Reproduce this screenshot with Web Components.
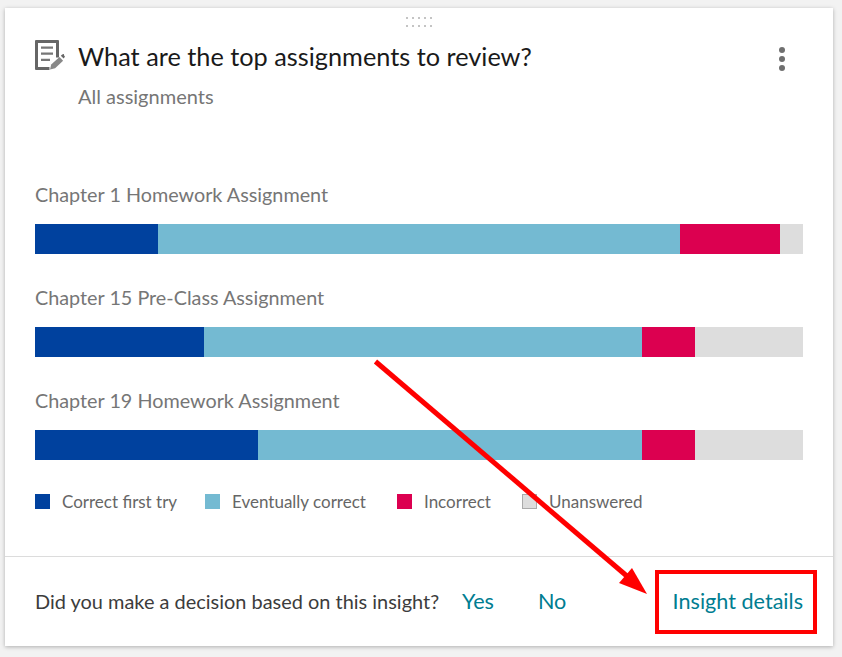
<!DOCTYPE html>
<html>
<head>
<meta charset="utf-8">
<style>
  html, body { margin: 0; height: 100%; background: #f2f2f2; }
  body { position: relative; overflow: hidden; padding: 8px 9px 0 5px; box-sizing: border-box; font-family: Lato, sans-serif; }
</style>
</head>
<body>
<insight-card>
  <span slot="title">What are the top assignments to review?</span>
  <span slot="subtitle">All assignments</span>
  <assignment-row label="Chapter 1 Homework Assignment" values="123,522,100,23"></assignment-row>
  <assignment-row label="Chapter 15 Pre-Class Assignment" values="169,438,53,108"></assignment-row>
  <assignment-row label="Chapter 19 Homework Assignment" values="223,384,53,108"></assignment-row>
  <chart-legend slot="legend"></chart-legend>
  <decision-footer slot="footer"></decision-footer>
</insight-card>
<callout-overlay></callout-overlay>

<script>
const fontStack = 'Lato, sans-serif';

class InsightCard extends HTMLElement {
  constructor() {
    super();
    this.attachShadow({ mode: 'open' });
    this.shadowRoot.innerHTML = `
      <style>
        :host{display: flex; flex-direction: column; width: 828px; height: 638px; background: #fff; box-shadow: 0 1px 4px rgba(0,0,0,.28); font-family: ${fontStack};}
        #grip{display: grid; grid-template-columns: repeat(5, 2px); grid-auto-rows: 2px; gap: 6px 4px; justify-content: center; align-content: start; padding-top: 9px; height: 11px;}
        #grip i{width: 2px; height: 2px; background: #c4c4c4;}
        header{display: flex; height: 104px; padding: 11px 48px 0 30px; box-sizing: border-box;}
        #icon{width: 30px; height: 30px; flex: none; margin-top: 1px;}
        #titles{flex: 1; margin-left: 13px;}
        #title{font-size: 25.300px; line-height: 34px; color: #1a1a1a;}
        #subtitle{font-size: 20px; line-height: 24px; margin-top: 11px; color: #767676;}
        #dots{width: 6px; display: flex; flex-direction: column; gap: 3px; padding-top: 8px;}
        #dots i{width: 6px; height: 6px; border-radius: 50%; background: #6f6f6f;}
        #rows{display: flex; flex-direction: column; gap: 32px; padding: 0 30px; margin-top: 51px;}
        #legend{padding: 0 30px; margin-top: 29px;}
        #footer{margin-top: auto; border-top: 1px solid #dcdcdc; height: 90px; box-sizing: border-box;}
      </style>
      <div id="grip">${'<i></i>'.repeat(10)}</div>
      <header>
        <svg id="icon" viewBox="0 0 30 30">
          <path d="M1 0h22a1 1 0 0 1 1 1v16.500h-3V3H3v24h11.500v3H1a1 1 0 0 1-1-1V1a1 1 0 0 1 1-1z" fill="#666"/>
          <path d="M6 6.500h12v2.300H6zM6 12.500h12v2.300H6zM6 18.800h9v2.300H6z" fill="#777"/>
          <path d="M15 29.500l1.200-5 8.300-7.500 3.600 3.700-8 7.500z" fill="#888"/>
          <path d="M25.800 15.800l1.400-1.200 1.500-.6 .3 .3v1l1 1.500-1.400 1.600z" fill="#666"/>
        </svg>
        <div id="titles">
          <div id="title"><slot name="title"></slot></div>
          <div id="subtitle"><slot name="subtitle"></slot></div>
        </div>
        <div id="dots"><i></i><i></i><i></i></div>
      </header>
      <div id="rows"><slot></slot></div>
      <div id="legend"><slot name="legend"></slot></div>
      <div id="footer"><slot name="footer"></slot></div>
    `;
  }
}

const barColors = ['#00419e', '#74bad2', '#dc0050', '#dddddd'];

class AssignmentRow extends HTMLElement {
  constructor() {
    super();
    this.attachShadow({ mode: 'open' });
    this.shadowRoot.innerHTML = `
      <style>
        :host{display: block;}
        #label{font-size: 19.800px; line-height: 22px; height: 24px; margin-bottom: 17px; color: #767676;}
        #bar{display: flex; height: 30px;}
      </style>
      <div id="label"></div>
      <div id="bar"></div>
    `;
  }

  connectedCallback() {
    this.shadowRoot.getElementById('label').textContent = this.getAttribute('label');
    let bar = this.shadowRoot.getElementById('bar');
    this.getAttribute('values').split(',').forEach((width, i) => {
      let part = document.createElement('div');
      part.style.width = width + 'px';
      part.style.background = barColors[i];
      bar.appendChild(part);
    });
  }
}

class ChartLegend extends HTMLElement {
  constructor() {
    super();
    this.attachShadow({ mode: 'open' });
    this.shadowRoot.innerHTML = `
      <style>
        :host{display: flex; align-items: center; height: 24px; font-size: 17px; color: #666;}
        .item{display: flex; align-items: center; white-space: nowrap;}
        .item i{width: 15px; height: 15px; margin-right: 12px; box-sizing: border-box;}
        .item:nth-of-type(1){width: 170px;}
        .item:nth-of-type(2){width: 192px;}
        .item:nth-of-type(3){width: 125px;}
        .item:nth-of-type(4) i{border: 1px solid #aaa;}
      </style>
      <div class="item"><i style="background:${barColors[0]}"></i>Correct first try</div>
      <div class="item"><i style="background:${barColors[1]}"></i>Eventually correct</div>
      <div class="item"><i style="background:${barColors[2]}"></i>Incorrect</div>
      <div class="item"><i style="background:${barColors[3]}"></i>Unanswered</div>
    `;
  }
}

class DecisionFooter extends HTMLElement {
  constructor() {
    super();
    this.attachShadow({ mode: 'open' });
    this.shadowRoot.innerHTML = `
      <style>
        :host{display: flex; align-items: center; height: 89px; padding: 0 30px 2px; box-sizing: border-box; font-size: 19.950px; color: #3c3c3c;}
        a{color: #007d91; font-size: 21.600px; text-decoration: none; white-space: nowrap;}
        #yes{margin-left: 23px;}
        #no{margin-left: 44px;}
        #details{margin-left: auto;}
      </style>
      <span id="question">Did you make a decision based on this insight?</span>
      <a id="yes" href="#">Yes</a>
      <a id="no" href="#">No</a>
      <a id="details" href="#">Insight details</a>
    `;
  }
}

class CalloutOverlay extends HTMLElement {
  constructor() {
    super();
    this.attachShadow({ mode: 'open' });
    this.shadowRoot.innerHTML = `
      <style>
        :host{display: block; position: absolute; left: 0; top: 0; width: 842px; height: 657px; pointer-events: none;}
      </style>
      <svg width="842" height="657" viewBox="0 0 842 657">
        <line x1="375.500" y1="361.500" x2="628" y2="577" stroke="#f00" stroke-width="5"/>
        <polygon points="647,594 619,583 632,568" fill="#f00"/>
        <rect x="657" y="572" width="158" height="60" fill="none" stroke="#f00" stroke-width="4"/>
      </svg>
    `;
  }
}

customElements.define('insight-card', InsightCard);
customElements.define('assignment-row', AssignmentRow);
customElements.define('chart-legend', ChartLegend);
customElements.define('decision-footer', DecisionFooter);
customElements.define('callout-overlay', CalloutOverlay);
</script>
</body>
</html>
